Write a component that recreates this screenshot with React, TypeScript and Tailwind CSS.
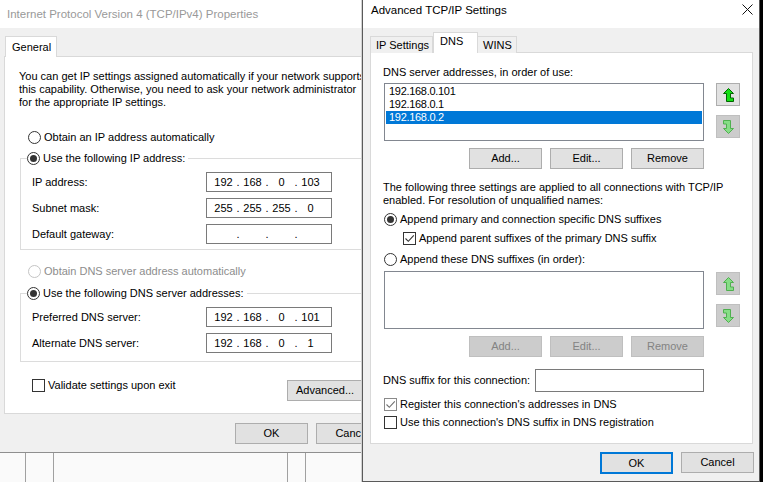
import React from 'react';

function Radio({ checked, disabled }: { checked?: boolean; disabled?: boolean }) {
  return (
    <span
      className={`flex h-[13px] w-[13px] shrink-0 items-center justify-center rounded-full border bg-white ${
        disabled ? 'border-[#c4c4c4]' : 'border-[#333333]'
      }`}
    >
      {checked && <span className="h-[7px] w-[7px] rounded-full bg-[#333333]" />}
    </span>
  );
}

function Check({ checked, muted }: { checked?: boolean; muted?: boolean }) {
  return (
    <span
      className={`flex h-[13px] w-[13px] shrink-0 items-center justify-center border bg-white ${
        muted ? 'border-[#8a8a8a]' : 'border-[#333333]'
      }`}
    >
      {checked && (
        <svg width="11" height="11" viewBox="0 0 11 11">
          <path d="M1.5 5.5 L4.3 8.3 L9.8 2.3" fill="none" stroke={muted ? '#707070' : '#333333'} strokeWidth="1.1" />
        </svg>
      )}
    </span>
  );
}

function IpBox({ parts }: { parts: string[] }) {
  return (
    <div className="flex h-[20px] w-[126px] items-center border border-[#7a7a7a] bg-white pl-[5px]">
      {parts.map((p, i) => (
        <React.Fragment key={i}>
          {i > 0 && <span className="w-[6px] text-center">.</span>}
          <span className="w-[23px] text-center">{p}</span>
        </React.Fragment>
      ))}
    </div>
  );
}

function Btn({ label, disabled, primary, wide }: { label: string; disabled?: boolean; primary?: boolean; wide?: boolean }) {
  let cls = 'border border-[#adadad] bg-[#e1e1e1] text-black';
  if (disabled) cls = 'border border-[#bfbfbf] bg-[#cccccc] text-[#838383]';
  if (primary) cls = 'border-2 border-[#0078d7] bg-[#e1e1e1] text-black';
  return (
    <div className={`flex shrink-0 items-center justify-center ${wide ? 'w-[76px]' : 'w-[73px]'} ${primary ? 'h-[22px]' : 'h-[21px]'} ${cls}`}>
      {label}
    </div>
  );
}

function Arrow({ down, disabled }: { down?: boolean; disabled?: boolean }) {
  return (
    <div
      className={`flex h-[23px] w-[24px] items-center justify-center border ${
        disabled ? 'border-[#bfbfbf] bg-[#cccccc]' : 'border-[#adadad] bg-[#e1e1e1]'
      }`}
    >
      <svg width="11" height="14" viewBox="0 0 11 14" className={down ? 'rotate-180' : ''}>
        <path
          d="M5.5 0.5 L10.5 5.5 L7.5 5.5 L7.5 10 L10.5 10 L10.5 13.5 L3.5 13.5 L3.5 5.5 L0.5 5.5 Z"
          fill={disabled ? '#86dd86' : '#14e014'}
          stroke={disabled ? '#4fb04f' : '#006400'}
          strokeWidth="1"
        />
      </svg>
    </div>
  );
}

function IpRow({ label, parts }: { label: string; parts: string[] }) {
  return (
    <div className="flex h-[20px] items-center">
      <span className="w-[185px] pl-[11px]">{label}</span>
      <IpBox parts={parts} />
    </div>
  );
}

function BackWindow() {
  return (
    <div className="absolute left-0 top-0 flex h-[482px] w-[440px] flex-col">
      <div className="h-[28px] shrink-0 bg-white pl-[7px] pt-[7px] text-[11.5px] leading-[14px] text-[#999999]">
        Internet Protocol Version 4 (TCP/IPv4) Properties
      </div>
      <div className="h-[425px] shrink-0 border-b border-[#8f8f8f] bg-[#f0f0f0] pt-[8px]">
        <div className="relative z-10 -mb-px ml-[5px] flex h-[21px] w-[52px] items-center border border-b-0 border-[#d9d9d9] bg-white pl-[6px]">
          General
        </div>
        <div className="mx-[4px] flex h-[358px] flex-col border border-[#d9d9d9] bg-white">
          <p className="ml-[14px] mt-[13px] whitespace-nowrap">
            You can get IP settings assigned automatically if your network supports
            <br />
            this capability. Otherwise, you need to ask your network administrator
            <br />
            for the appropriate IP settings.
          </p>
          <div className="ml-[23px] mt-[20px] flex h-[16px] items-center gap-[3px]">
            <Radio />
            <span>Obtain an IP address automatically</span>
          </div>
          <fieldset className="ml-[15px] mt-[5px] w-[400px] border border-[#dcdcdc] pb-[5px]">
            <legend className="ml-[6px] flex h-[16px] items-center gap-[3px] pr-[3px]">
              <Radio checked />
              <span>Use the following IP address:</span>
            </legend>
            <div className="mt-[6px] flex flex-col gap-[6px]">
              <IpRow label="IP address:" parts={['192', '168', '0', '103']} />
              <IpRow label="Subnet mask:" parts={['255', '255', '255', '0']} />
              <IpRow label="Default gateway:" parts={['', '', '', '']} />
            </div>
          </fieldset>
          <div className="ml-[23px] mt-[13px] flex h-[16px] items-center gap-[3px] text-[#8d8d8d]">
            <Radio disabled />
            <span>Obtain DNS server address automatically</span>
          </div>
          <fieldset className="ml-[15px] mt-[6px] w-[400px] border border-[#dcdcdc] pb-[8px]">
            <legend className="ml-[6px] flex h-[16px] items-center gap-[3px] pr-[3px]">
              <Radio checked />
              <span>Use the following DNS server addresses:</span>
            </legend>
            <div className="mt-[6px] flex flex-col gap-[6px]">
              <IpRow label="Preferred DNS server:" parts={['192', '168', '0', '101']} />
              <IpRow label="Alternate DNS server:" parts={['192', '168', '0', '1']} />
            </div>
          </fieldset>
          <div className="mt-[15px] flex items-start">
            <div className="ml-[27px] flex h-[16px] w-[255px] items-center gap-[3px]">
              <Check />
              <span>Validate settings upon exit</span>
            </div>
            <div className="mt-[3px]">
              <Btn label="Advanced..." wide />
            </div>
          </div>
        </div>
        <div className="mt-[9px] flex gap-[8px] pl-[235px]">
          <Btn label="OK" />
          <Btn label="Cancel" />
        </div>
      </div>
      <div className="flex flex-1 bg-[#fafafa]">
        <div className="w-[26px] border-r border-[#a0a0a0]" />
        <div className="w-[28px] border-r border-[#a0a0a0]" />
        <div className="w-[234px] border-r border-[#a0a0a0]" />
        <div className="w-[18px] border-r border-[#a0a0a0]" />
        <div className="flex-1" />
      </div>
    </div>
  );
}

function FrontWindow() {
  return (
    <div className="absolute left-[362px] top-0 flex h-[482px] w-[398px] flex-col border-x border-b border-[#5a5a5a] shadow-[-1px_0_0_#d2d2d2]">
      <div className="flex h-[28px] shrink-0 items-start justify-between bg-white pl-[8px] pr-[6px] pt-[3px] text-[11.5px] leading-[14px]">
        <span>Advanced TCP/IP Settings</span>
        <svg width="11" height="11" viewBox="0 0 11 11" className="mt-[1px]">
          <path d="M0.5 0.5 L10.5 10.5 M10.5 0.5 L0.5 10.5" stroke="#111111" strokeWidth="1" />
        </svg>
      </div>
      <div className="flex-1 bg-[#f0f0f0] pt-[4px]">
        <div className="relative z-10 -mb-px ml-[7px] flex items-end">
          <div className="flex h-[17px] w-[63px] items-center border border-b-0 border-[#d9d9d9] bg-[#f0f0f0] pl-[5px]">IP Settings</div>
          <div className="flex h-[21px] w-[45px] items-center border border-b-0 border-[#d9d9d9] bg-white pb-[3px] pl-[6px]">DNS</div>
          <div className="flex h-[17px] w-[39px] items-center border border-b-0 border-l-0 border-[#d9d9d9] bg-[#f0f0f0] pl-[5px]">WINS</div>
        </div>
        <div className="ml-[7px] flex h-[392px] w-[383px] flex-col border border-[#d9d9d9] bg-white">
          <div className="ml-[12px] mt-[13px]">DNS server addresses, in order of use:</div>
          <div className="mt-[4px] flex">
            <div className="ml-[13px] h-[58px] w-[320px] border border-[#828790] p-[1px] tracking-[-0.3px]">
              <div className="h-[13px] pl-[3px]">192.168.0.101</div>
              <div className="h-[13px] pl-[3px]">192.168.0.1</div>
              <div className="h-[13px] bg-[#0078d7] pl-[3px] text-white">192.168.0.2</div>
            </div>
            <div className="ml-[12px] flex flex-col gap-[9px]">
              <Arrow />
              <Arrow down disabled />
            </div>
          </div>
          <div className="mt-[7px] flex gap-[8px] pl-[98px]">
            <Btn label="Add..." />
            <Btn label="Edit..." />
            <Btn label="Remove" />
          </div>
          <p className="ml-[12px] mt-[12px] whitespace-nowrap">
            The following three settings are applied to all connections with TCP/IP
            <br />
            enabled. For resolution of unqualified names:
          </p>
          <div className="ml-[13px] mt-[4px] flex h-[16px] items-center gap-[3px]">
            <Radio checked />
            <span>Append primary and connection specific DNS suffixes</span>
          </div>
          <div className="ml-[32px] mt-[3px] flex h-[16px] items-center gap-[3px]">
            <Check checked />
            <span>Append parent suffixes of the primary DNS suffix</span>
          </div>
          <div className="ml-[13px] mt-[5px] flex h-[16px] items-center gap-[3px]">
            <Radio />
            <span>Append these DNS suffixes (in order):</span>
          </div>
          <div className="mt-[4px] flex">
            <div className="ml-[13px] h-[58px] w-[320px] border border-[#828790] bg-white" />
            <div className="ml-[12px] flex flex-col gap-[9px] pt-[1px]">
              <Arrow disabled />
              <Arrow down disabled />
            </div>
          </div>
          <div className="mt-[7px] flex gap-[8px] pl-[98px]">
            <Btn label="Add..." disabled />
            <Btn label="Edit..." disabled />
            <Btn label="Remove" disabled />
          </div>
          <div className="mt-[12px] flex items-center">
            <span className="w-[164px] pl-[12px]">DNS suffix for this connection:</span>
            <div className="h-[23px] w-[169px] border border-[#7a7a7a] bg-white" />
          </div>
          <div className="ml-[13px] mt-[4px] flex h-[16px] items-center gap-[3px]">
            <Check checked muted />
            <span>Register this connection's addresses in DNS</span>
          </div>
          <div className="ml-[13px] mt-[2px] flex h-[16px] items-center gap-[3px]">
            <Check />
            <span>Use this connection's DNS suffix in DNS registration</span>
          </div>
        </div>
        <div className="mt-[8px] flex gap-[8px] pl-[237px]">
          <Btn label="OK" primary />
          <Btn label="Cancel" />
        </div>
      </div>
    </div>
  );
}

export default function App() {
  return (
    <div className="relative h-[482px] w-[763px] overflow-hidden bg-black font-['Liberation_Sans',Arial,sans-serif] text-[11px] leading-[13px] text-black">
      <BackWindow />
      <FrontWindow />
    </div>
  );
}
